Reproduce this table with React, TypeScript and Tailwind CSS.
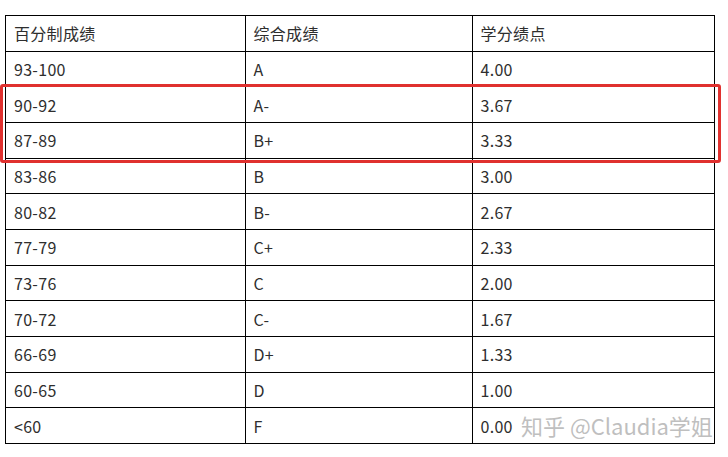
const rows: [string, string, string][] = [
  ['93-100', 'A', '4.00'],
  ['90-92', 'A-', '3.67'],
  ['87-89', 'B+', '3.33'],
  ['83-86', 'B', '3.00'],
  ['80-82', 'B-', '2.67'],
  ['77-79', 'C+', '2.33'],
  ['73-76', 'C', '2.00'],
  ['70-72', 'C-', '1.67'],
  ['66-69', 'D+', '1.33'],
  ['60-65', 'D', '1.00'],
  ['<60', 'F', '0.00'],
];

const font = { fontFamily: '"Noto Sans CJK SC", "Noto Sans", sans-serif' };

function Cell({ children }: { children: React.ReactNode }) {
  return (
    <td className="border border-black h-[35.67px] pl-[8px] p-0 text-[16px] text-[#2e2e2e] leading-none align-middle tracking-[0.3px]">
      {children}
    </td>
  );
}

export default function App() {
  return (
    <div className="relative w-[728px] h-[457px] bg-white overflow-hidden" style={font}>
      <div className="pt-[15px] pl-[5px]">
        <table className="border-collapse table-fixed w-[709px]">
          <colgroup>
            <col className="w-[239.5px]" />
            <col className="w-[227px]" />
            <col className="w-[242.5px]" />
          </colgroup>
          <tbody>
            <tr>
              <Cell>百分制成绩</Cell>
              <Cell>综合成绩</Cell>
              <Cell>学分绩点</Cell>
            </tr>
            {rows.map((r) => (
              <tr key={r[0]}>
                <Cell>{r[0]}</Cell>
                <Cell>{r[1]}</Cell>
                <Cell>{r[2]}</Cell>
              </tr>
            ))}
          </tbody>
        </table>
      </div>

      {/* highlight box */}
      <div className="absolute left-[0px] top-[84px] w-[721px] h-[79px] border-[3px] border-[#e0312f] rounded-[3px]" />

      {/* watermark */}
      <div className="absolute left-[521px] top-[414px] text-[22px] leading-none text-[#bfbfbf] whitespace-nowrap [text-shadow:0_0_2px_#fff]">
        知乎 @Claudia学姐
      </div>
    </div>
  );
}
